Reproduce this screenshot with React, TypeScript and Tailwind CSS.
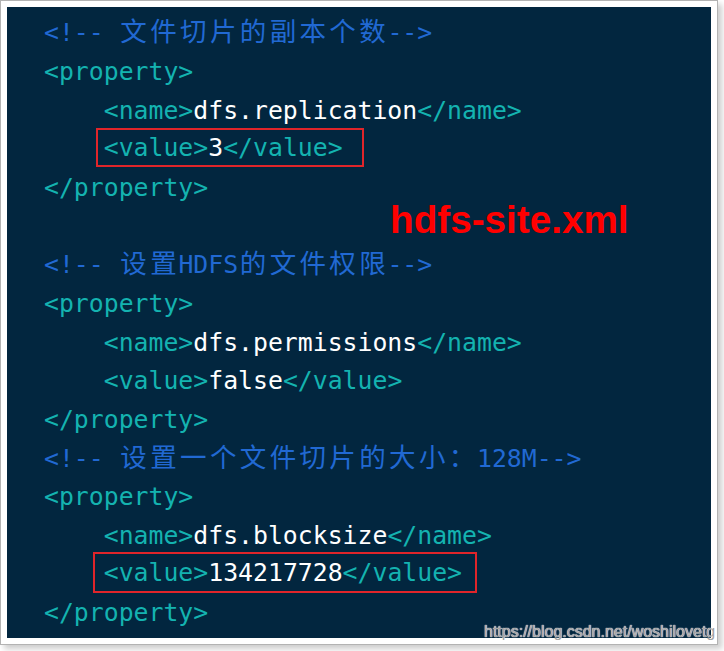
import React from "react";

type Kind = "c" | "t" | "x";
type Tok = [string, Kind];

const tone: Record<Kind, string> = {
    c: "text-[#2169d3]",
    t: "text-[#14b3b0]",
    x: "text-white",
};

const IND = "    ";

const lines: { toks: Tok[]; box?: 1 | 2; label?: boolean }[] = [
    { toks: [["<!-- 文件切片的副本个数-->", "c"]] },
    { toks: [["<property>", "t"]] },
    { toks: [[IND, "x"], ["<name>", "t"], ["dfs.replication", "x"], ["</name>", "t"]] },
    { toks: [[IND, "x"], ["<value>", "t"], ["3", "x"], ["</value>", "t"]], box: 1 },
    { toks: [["</property>", "t"]] },
    { toks: [], label: true },
    { toks: [["<!-- 设置HDFS的文件权限-->", "c"]] },
    { toks: [["<property>", "t"]] },
    { toks: [[IND, "x"], ["<name>", "t"], ["dfs.permissions", "x"], ["</name>", "t"]] },
    { toks: [[IND, "x"], ["<value>", "t"], ["false", "x"], ["</value>", "t"]] },
    { toks: [["</property>", "t"]] },
    { toks: [["<!-- 设置一个文件切片的大小：128M-->", "c"]] },
    { toks: [["<property>", "t"]] },
    { toks: [[IND, "x"], ["<name>", "t"], ["dfs.blocksize", "x"], ["</name>", "t"]] },
    { toks: [[IND, "x"], ["<value>", "t"], ["134217728", "x"], ["</value>", "t"]], box: 2 },
    { toks: [["</property>", "t"]] },
];

// CJK glyphs take two columns in the editor
const wide = /[\u3000-\u9fff\uff00-\uffef]/;

const Text = ({ s }: { s: string }) => {
    const parts: React.ReactNode[] = [];
    let buf = "";
    Array.from(s).forEach((ch, i) => {
        if (wide.test(ch)) {
            if (buf) parts.push(buf);
            buf = "";
            parts.push(<span key={i} className="inline-block w-[29.86px] text-center text-[26.5px] leading-none">{ch}</span>);
        } else {
            buf += ch;
        }
    });
    if (buf) parts.push(buf);
    return <>{parts}</>;
};

const Toks = ({ toks }: { toks: Tok[] }) => (
    <>
        {toks.map(([s, k], i) => (
            <span key={i} className={tone[k]}><Text s={s} /></span>
        ))}
    </>
);

const App = () => {
    return (
        <div className="w-[724px] h-[651px] bg-white">
            <div className="relative w-[718px] h-[645px] border border-[#b3b3b3] bg-white p-[6px] shadow-[4px_4px_6px_rgba(0,0,0,0.2)] overflow-hidden">
                <div className="w-[704px] h-[631px] bg-[#02263f] pt-[6.67px] pl-[37px] font-['DejaVu_Sans_Mono','Noto_Sans_CJK_SC',monospace] text-[24.8px]">
                    {lines.map((line, i) => {
                        if (line.label) {
                            return (
                                <div key={i} className="flex h-[38.67px]">
                                    <div className="ml-[346px] -mt-[6px] leading-[38.67px] font-['Liberation_Sans',Arial,sans-serif] font-bold text-[38.7px] text-[#ff0000]">
                                        hdfs-site.xml
                                    </div>
                                </div>
                            );
                        }
                        const [ind, ...rest] = line.toks;
                        if (line.box === 1) {
                            return (
                                <div key={i} className="flex h-[38.67px] items-center whitespace-pre">
                                    <span className="text-white">{ind[0]}</span>
                                    <span className="-ml-[8px] -mt-[3px] flex h-[39px] items-center border-2 border-[#e0252a] pl-[6px] pr-[19px]">
                                        <Toks toks={rest} />
                                    </span>
                                </div>
                            );
                        }
                        if (line.box === 2) {
                            return (
                                <div key={i} className="flex h-[38.67px] items-center whitespace-pre">
                                    <span className="text-white">{ind[0]}</span>
                                    <span className="-ml-[11px] -mt-[4px] flex h-[41px] items-center border-2 border-[#e0252a] pl-[9px] pr-[13px]">
                                        <Toks toks={rest} />
                                    </span>
                                </div>
                            );
                        }
                        return (
                            <div key={i} className="flex h-[38.67px] items-center whitespace-pre">
                                <Toks toks={line.toks} />
                            </div>
                        );
                    })}
                </div>
                <div className="absolute left-[483px] top-[623px] whitespace-nowrap font-['Liberation_Sans',Arial,sans-serif] text-[16px] leading-none text-[#a3a3a3] [text-shadow:0_0_1px_#fff,0_0_1px_#fff]">
                    https://blog.csdn.net/woshilovetg
                </div>
            </div>
        </div>
    );
};

export default App;
